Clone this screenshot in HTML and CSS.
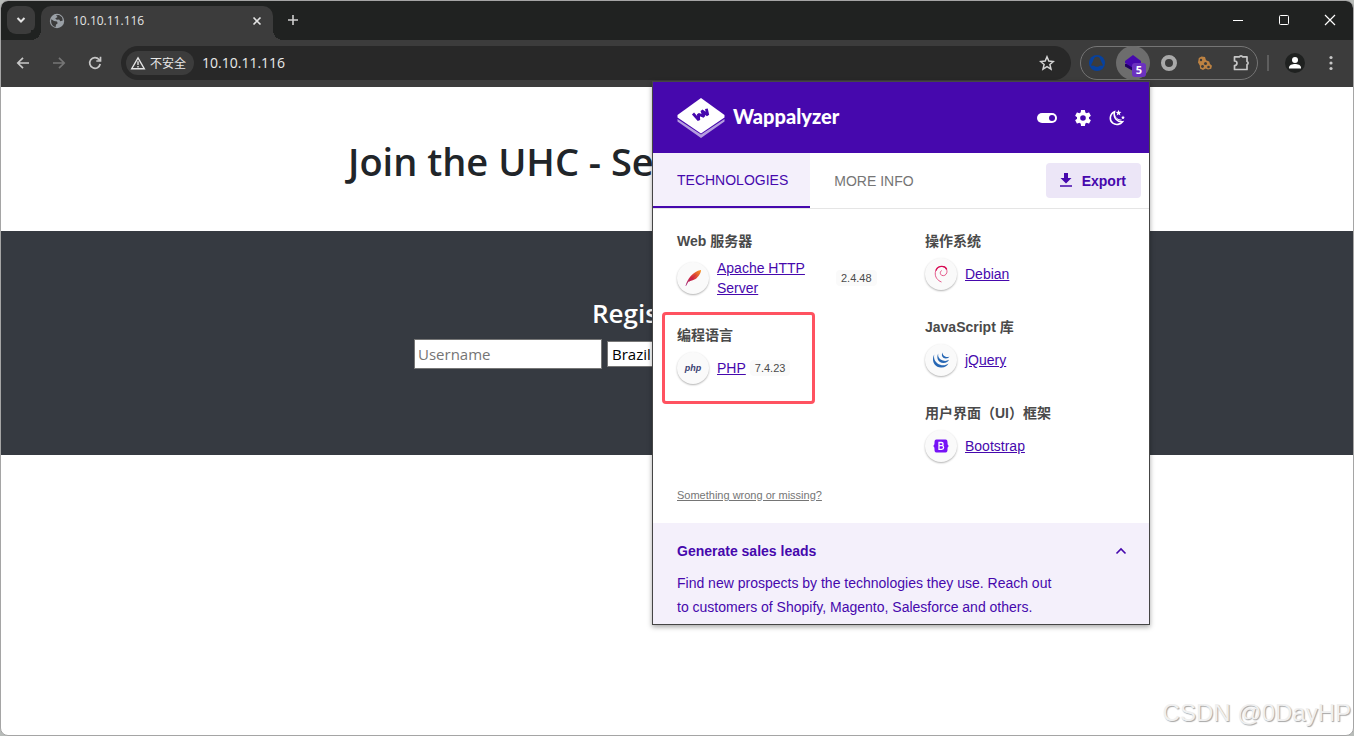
FILE: index.html
```html
<!DOCTYPE html>
<html lang="zh-CN">
<head>
<meta charset="utf-8">
<title>10.10.11.116</title>
<link rel="stylesheet" href="styles.css">
</head>
<body>
<div class="window">
  <header class="tabstrip">
    <button class="tab-search" aria-label="Search tabs"><svg width="12" height="12" viewBox="0 0 12 12"><path d="M2.500 4 6 7.500 9.500 4" fill="none" stroke="#e3e3e3" stroke-width="2"/></svg></button>
    <div class="tab">
      <svg width="16" height="16" viewBox="0 0 16 16"><circle cx="8" cy="8" r="7.200" fill="#9aa0a6"/><path d="M2.300 6.200 5 8l3 .6.7 1.700-1.800 1.400-.2 2.300C3.500 13.600 1.500 10.500 2.300 6.200ZM7 2.200l3-.2 3 2.200.8 3.400-2.400.6-1.300-1.700-2.300.3-1.600-1.400L8.600 4Z" fill="#3c3c3c"/></svg>
      <span class="tab-title">10.10.11.116</span>
      <button class="icon-btn" aria-label="Close tab"><svg width="10" height="10" viewBox="0 0 10 10"><path d="m1.500 1.500 7 7m0-7-7 7" stroke="#e3e3e3" stroke-width="1.600"/></svg></button>
    </div>
    <button class="icon-btn new-tab" aria-label="New tab"><svg width="12" height="12" viewBox="0 0 12 12"><path d="M6 1v10M1 6h10" stroke="#d0d0d0" stroke-width="1.600"/></svg></button>
    <div class="window-controls">
      <button class="icon-btn" aria-label="Minimize"><svg width="12" height="12" viewBox="0 0 12 12"><path d="M1 6.500h10" stroke="#fff"/></svg></button>
      <button class="icon-btn" aria-label="Maximize"><svg width="12" height="12" viewBox="0 0 12 12"><rect x="1.500" y="1.500" width="9" height="9" rx="1" fill="none" stroke="#fff"/></svg></button>
      <button class="icon-btn" aria-label="Close"><svg width="12" height="12" viewBox="0 0 12 12"><path d="m1 1 10 10M11 1 1 11" stroke="#fff" stroke-width="1.200"/></svg></button>
    </div>
  </header>

  <nav class="toolbar">
    <div class="nav-buttons">
      <button class="icon-btn" aria-label="Back"><svg width="16" height="16" viewBox="0 0 16 16"><path d="M14 8H3M8 2.800 2.800 8 8 13.200" fill="none" stroke="#c7c7c7" stroke-width="1.700"/></svg></button>
      <button class="icon-btn" aria-label="Forward"><svg width="16" height="16" viewBox="0 0 16 16"><path d="M2 8h11M8 2.800 13.200 8 8 13.200" fill="none" stroke="#757575" stroke-width="1.700"/></svg></button>
      <button class="icon-btn" aria-label="Reload"><svg width="16" height="16" viewBox="0 0 16 16"><path d="M13.200 9A5.300 5.300 0 1 1 12 4.500L13.500 6M13.500 1.800V6H9.300" fill="none" stroke="#c7c7c7" stroke-width="1.700"/></svg></button>
    </div>
    <div class="omnibox">
      <button class="security"><svg width="16" height="14" viewBox="0 0 16 14"><path d="M8 1.800 14.300 12.700H1.700Z" fill="none" stroke="#e3e3e3" stroke-width="1.400"/><path d="M8 5.300v3.700M8 10v1.400" stroke="#e3e3e3" stroke-width="1.400"/></svg>不安全</button>
      <input class="address" type="text" value="10.10.11.116" aria-label="Address">
      <button class="icon-btn" aria-label="Bookmark this page"><svg width="16" height="16" viewBox="0 0 16 16"><path d="m8 1.800 1.800 4.300 4.600.4-3.500 3 1.100 4.600L8 11.700l-4 2.400 1.100-4.600-3.500-3 4.600-.4Z" fill="none" stroke="#d5d5d5" stroke-width="1.500"/></svg></button>
    </div>
    <div class="extensions">
      <button class="ext" aria-label="Hosts extension"><svg width="18" height="18" viewBox="0 0 18 18"><circle cx="9" cy="9" r="8" fill="#07419d"/><path d="M9 2.800c2.300 0 3 1.600 3.800 4l2.300 4.700-3.400.2c-1 1.500-4.400 1.500-5.400 0l-3.400-.2 2.300-4.700c.8-2.400 1.500-4 3.800-4Z" fill="#3c3c3c"/></svg></button>
      <button class="ext ext-active" aria-label="Wappalyzer"><svg width="18" height="18" viewBox="0 0 18 18"><path d="M1 10v2.500L9 17l8-4.500V10Z" fill="#210062"/><path d="M9 1 17 7v2l-8 5-8-5V7Z" fill="#4608ad"/></svg><span class="badge">5</span></button>
      <button class="ext" aria-label="Proxy"><svg width="18" height="18" viewBox="0 0 18 18"><circle cx="9" cy="9" r="6" fill="none" stroke="#a9a9a9" stroke-width="4"/></svg></button>
      <button class="ext" aria-label="Cookie editor"><svg width="18" height="18" viewBox="0 0 18 18"><path d="M5.500 2.500 9 3l1 3.300 3.200 1.200.8 2.500 2 1.800-.8 3-3.200.8-2.500-1-2.500 1.300-3-1.500-.2-3L2 8.500 2.800 4Z" fill="#bd8242"/><g fill="#3c3c3c"><circle cx="5" cy="6" r="1.200"/><circle cx="9.500" cy="9.500" r="1.500"/><circle cx="6.500" cy="12.500" r="1.400"/><circle cx="12.500" cy="13" r="1.300"/></g></svg></button>
      <button class="ext" aria-label="Extensions"><svg width="18" height="18" viewBox="0 0 18 18"><path d="M2.500 2.900H7.500C7.800 1.500 10.200 1.500 10.500 2.900H15V7.500C16.500 7.800 16.500 10.200 15 10.500V15.500H2.500V11.500C5.800 11.500 5.800 7 2.500 7Z" fill="none" stroke="#c7c7c7" stroke-width="1.700" stroke-linejoin="round"/></svg></button>
    </div>
    <span class="divider"></span>
    <button class="profile" aria-label="Profile"><svg width="20" height="20" viewBox="0 0 20 20"><circle cx="10" cy="7" r="3" fill="#fff"/><path d="M4 15.500v-1c0-2.500 3.500-3.500 6-3.500s6 1 6 3.500v1Z" fill="#fff"/></svg></button>
    <button class="icon-btn menu" aria-label="Menu"><svg width="4" height="16" viewBox="0 0 4 16"><g fill="#c7c7c7"><circle cx="2" cy="2.500" r="1.600"/><circle cx="2" cy="8" r="1.600"/><circle cx="2" cy="13.500" r="1.600"/></g></svg></button>
  </nav>

  <main class="page">
    <h1 class="page-title">Join the UHC - Se</h1>
    <section class="register">
      <h2 class="register-title">Regis</h2>
      <form class="register-form">
        <input class="username" type="text" placeholder="Username" aria-label="Username">
        <select class="country" aria-label="Country"><option>Brazil</option></select>
      </form>
    </section>
  </main>

  <aside class="popup">
    <header class="popup-header">
      <svg width="48" height="40" viewBox="0 0 48 40"><path d="M.5 21v2.500L24 40l23.500-16.500V21L24 36.500Z" fill="#b59ddf"/><path d="M24 0 47.500 17v2.500L24 35.500.5 19.500V17Z" fill="#fff"/><path d="m16 15.500 5.800 6.500-.4-5.800 5.600 2.200-2.200-5.800 6 4.500-1.400-6.300" fill="none" stroke="#4608ad" stroke-width="2.800" stroke-linejoin="bevel"/></svg>
      <span class="brand">Wappalyzer</span>
      <div class="popup-tools">
        <button class="icon-btn" aria-label="Toggle"><svg width="20" height="12" viewBox="0 0 20 12"><rect y="1" width="20" height="10" rx="5" fill="#fff"/><circle cx="15" cy="6" r="3" fill="#4608ad"/></svg></button>
        <button class="icon-btn" aria-label="Settings"><svg width="16" height="16" viewBox="2 2 20 20"><path fill="#fff" d="M12 15.500A3.500 3.500 0 0 1 8.500 12 3.500 3.500 0 0 1 12 8.500a3.500 3.500 0 0 1 3.500 3.500 3.500 3.500 0 0 1-3.500 3.500m7.430-2.530c.04-.32.070-.64.070-.97s-.03-.66-.07-1l2.110-1.630c.19-.15.240-.42.120-.64l-2-3.460c-.12-.22-.39-.31-.61-.22l-2.490 1c-.52-.39-1.060-.73-1.690-.98l-.37-2.650A.506.506 0 0 0 14 2h-4c-.25 0-.46.180-.5.420l-.37 2.650c-.63.250-1.170.590-1.690.98l-2.490-1c-.22-.09-.49 0-.61.220l-2 3.460c-.13.220-.07.490.120.640L4.570 11c-.04.340-.07.670-.07 1s.03.650.070.970l-2.110 1.660c-.19.150-.25.420-.12.640l2 3.460c.12.220.390.300.610.220l2.490-1.010c.52.400 1.060.740 1.690.990l.37 2.650c.04.240.250.420.5.420h4c.25 0 .46-.18.500-.42l.37-2.650c.63-.26 1.170-.59 1.690-.99l2.490 1.010c.22.080.490 0 .61-.22l2-3.460c.12-.22.070-.49-.12-.64z"/></svg></button>
        <button class="icon-btn" aria-label="Dark mode"><svg width="16" height="18" viewBox="1 0 16 18"><path d="M6.500 2.800C1.500 5 1 11.500 4.800 14.200c3.200 2.300 7.700 1.300 9.700-1.400-5 .6-9.500-3.800-8-10Z" fill="none" stroke="#fff" stroke-width="1.600"/><path d="M6.500 5c.2 3.500 3.500 6.200 7 6" fill="none" stroke="#fff"/><path d="m10.500.8.8 2 2.200.1-1.700 1.400.6 2.100-1.900-1.200-1.800 1.200.6-2.100-1.700-1.400 2.200-.1ZM15 6.500l.5 1.300 1.500.1-1.100.9.300 1.400-1.200-.8-1.200.8.300-1.400-1.100-.9 1.500-.1Z" fill="#fff"/></svg></button>
      </div>
    </header>
    <div class="popup-tabs">
      <button class="popup-tab selected">TECHNOLOGIES</button>
      <button class="popup-tab">MORE INFO</button>
      <button class="export"><svg width="14" height="16" viewBox="0 0 14 16"><path d="M5 0h4v5h3.500L7 10.500 1.500 5H5Z" fill="#4608ad"/><path d="M1 13h12" stroke="#4608ad" stroke-width="1.600"/></svg>Export</button>
    </div>
    <div class="technologies">
      <div class="column">
        <section class="category">
          <h3 class="category-title">Web 服务器</h3>
          <div class="tech"><span class="logo"><svg width="18" height="18" viewBox="0 0 18 18"><defs><linearGradient id="feather" x1="0" y1="1" x2="1" y2="0"><stop offset="0" stop-color="#9b2d83"/><stop offset=".45" stop-color="#d4243b"/><stop offset="1" stop-color="#f69923"/></linearGradient></defs><path d="M1.500 17C3.500 10 8.500 2.500 17 1c.2 2.500-2.500 7-5.500 9-2 1.200-5 2-7 2.500L2 17Z" fill="url(#feather)"/><path d="M4.500 13 12 5.500" stroke="#b02256" stroke-width=".7"/></svg></span><a class="tech-link wrap" href="#">Apache HTTP Server</a><span class="version">2.4.48</span></div>
        </section>
        <section class="category">
          <h3 class="category-title">编程语言</h3>
          <div class="tech"><span class="logo php">php</span><a class="tech-link" href="#">PHP</a><span class="version">7.4.23</span></div>
        </section>
      </div>
      <div class="column">
        <section class="category">
          <h3 class="category-title">操作系统</h3>
          <div class="tech"><span class="logo"><svg width="16" height="18" viewBox="0 0 16 18"><path d="M8.500 17C4.500 15.500 1.800 12 2.300 7.500 2.700 3.500 6 1.300 9 1.500c3.500.2 5.600 3.300 4.800 6.200-.6 2.400-3 3.500-4.900 2.700-2-.9-2.200-3.700-.2-4.900" fill="none" stroke="#e0437c" stroke-width=".9"/><path d="M3 5.500C4 2.500 7 1 9.500 1.400c2 .2 3.600 1.500 4.200 3" fill="none" stroke="#d70a53" stroke-width="1.400"/></svg></span><a class="tech-link" href="#">Debian</a></div>
        </section>
        <section class="category">
          <h3 class="category-title">JavaScript 库</h3>
          <div class="tech"><span class="logo"><svg width="18" height="18" viewBox="0 0 18 18"><g fill="#2767b4"><path d="M2.300 3.500C-.5 8 1 16 9 16.500c3.800.2 6.500-1.800 7.500-4-2.500 1.800-5.500 2.200-8.300 1.200C3.500 12 1.200 8 2.300 3.500Z"/><path d="M6.300 2.500C4 6.500 6 11.800 11.500 12c2.800 0 4.800-1.400 5.500-3.200-2 1.200-4 1.400-6 .8C7.500 8.500 5.500 5.800 6.300 2.500Z"/><path d="M10.500 1.500C9 4.500 10.500 7.300 13.800 7.500c1.800 0 3-.8 3.700-2-1.300.6-2.700.7-3.900.2-2-.8-3.300-2.300-3.100-4.200Z"/></g></svg></span><a class="tech-link" href="#">jQuery</a></div>
        </section>
        <section class="category">
          <h3 class="category-title">用户界面（UI）框架</h3>
          <div class="tech"><span class="logo"><svg width="16" height="14" viewBox="0 0 16 14"><path d="M3.500.5h9C14.300.5 14.500 2 14.500 3.500c0 1.800.3 3 1.500 3.500-1.200.5-1.500 1.700-1.500 3.500 0 1.500-.2 3-2 3h-9c-1.800 0-2-1.500-2-3C1.500 8.700 1.200 7.500 0 7c1.200-.5 1.500-1.700 1.500-3.500 0-1.500.2-3 2-3Z" fill="#7612f6"/><path d="M6 3.500h2.500a1.600 1.600 0 0 1 0 3.200H6Zm0 3.200h2.800a1.800 1.800 0 0 1 0 3.600H6Z" fill="none" stroke="#fff" stroke-width="1.300"/></svg></span><a class="tech-link" href="#">Bootstrap</a></div>
        </section>
      </div>
    </div>
    <a class="feedback" href="#">Something wrong or missing?</a>
    <section class="leads">
      <div class="leads-head"><h3 class="leads-title">Generate sales leads</h3><button class="icon-btn" aria-label="Collapse"><svg width="12" height="8" viewBox="0 0 12 8"><path d="m1.500 6.500 4.500-4.500 4.500 4.500" fill="none" stroke="#4608ad" stroke-width="1.600"/></svg></button></div>
      <p class="leads-text">Find new prospects by the technologies they use. Reach out to customers of Shopify, Magento, Salesforce and others.</p>
    </section>
    <div class="highlight"></div>
  </aside>
  <div class="watermark">CSDN @0DayHP</div>
</div>
</body>
</html>
```
FILE: styles.css
```css
* { box-sizing: border-box; }
body { margin: 0; background: #b8bcb9; font-family: "Open Sans", "Noto Sans CJK SC", sans-serif; }
button, input, select { font-family: inherit; margin: 0; }
button { border: 0; padding: 0; background: none; }
svg { display: block; flex: none; }
h1, h2, h3, p { margin: 0; }

.window { position: relative; display: flex; flex-direction: column; min-height: 100vh; border: 1px solid #a5a5a5; border-radius: 8px; background: #fff; overflow: hidden; }
.icon-btn { display: flex; align-items: center; justify-content: center; }

.tabstrip { display: flex; align-items: center; height: 39px; padding: 0 0 1px 6px; background: #202221; }
.tab-search { display: flex; align-items: center; justify-content: center; width: 28px; height: 28px; border-radius: 9px; background: #3c3c3c; }
.tab { position: relative; display: flex; align-items: center; gap: 8px; align-self: flex-end; width: 232px; height: 34px; margin: 0 0 -1px 6px; padding: 0 11px 5px 8px; border-radius: 10px 10px 0 0; background: #3c3c3c; }
.tab::before, .tab::after { content: ""; position: absolute; bottom: 0; width: 10px; height: 10px; }
.tab::before { right: 100%; background: radial-gradient(circle at 0 0, #202221 10px, #3c3c3c 10px); }
.tab::after { left: 100%; background: radial-gradient(circle at 100% 0, #202221 10px, #3c3c3c 10px); }
.tab-title { flex: 1; color: #e3e3e3; font-size: 12px; }
.new-tab { width: 40px; height: 28px; }
.window-controls { display: flex; margin-left: auto; }
.window-controls .icon-btn { width: 46px; height: 38px; }

.toolbar { display: flex; align-items: center; height: 47px; padding: 0 14px 2px; background: #3c3c3c; }
.nav-buttons { display: flex; gap: 20px; }
.omnibox { display: flex; align-items: center; flex: 1; height: 34px; margin: 0 9px 0 18px; padding: 0 16px 0 5px; border-radius: 17px; background: #282828; }
.security { display: flex; align-items: center; gap: 4px; height: 24px; padding: 0 8px 0 4px; border-radius: 12px; background: #3c3c3c; color: #e8e8e8; font-size: 12px; }
.address { flex: 1; min-width: 0; border: 0; padding: 0 8px; background: none; color: #e8e8e8; font-size: 14px; outline: 0; }
.extensions { display: flex; align-items: center; justify-content: center; gap: 2px; width: 178px; height: 34px; border: 1px solid #757575; border-radius: 17px; }
.ext { position: relative; display: flex; align-items: center; justify-content: center; flex: none; width: 34px; height: 34px; border-radius: 50%; }
.ext-active { background: #6d6d6d; }
.badge { position: absolute; right: 4px; bottom: 3px; width: 14px; height: 14px; border-radius: 3px; background: #6b32bf; color: #fff; font-size: 11px; font-weight: 700; line-height: 14px; }
.divider { width: 2px; height: 16px; margin: 0 16px 0 9px; background: #5e5e5e; }
.profile { display: flex; align-items: center; justify-content: center; width: 20px; height: 20px; border-radius: 50%; background: #1f2120; }
.menu { width: 20px; margin-left: 16px; margin-right: -2px; }

.page { flex: 1; color: #212529; }
.page-title { width: 658px; margin: 0 auto; padding: 50px 0 46px; font-size: 38px; font-weight: 600; line-height: 48px; white-space: nowrap; }
.register { height: 224px; padding-top: 65px; background: #363a41; color: #fff; }
.register-title { width: 170px; margin: 0 auto; font-size: 26px; font-weight: 600; line-height: 34px; }
.register-form { display: flex; align-items: center; gap: 5px; width: 526px; margin: 9px auto 0; }
.username { width: 188px; height: 30px; border: 1px solid #767676; padding: 1px 3px; background: #fff; font-size: 15px; }
.username::placeholder { color: #757575; }
.country { width: 180px; height: 26px; border: 1px solid #767676; border-radius: 0; background: #fff; color: #000; font-size: 15px; padding: 0; }

.popup { position: absolute; top: 80px; right: 203px; width: 498px; border: 1px solid #454545; background: #fff; box-shadow: 0 2px 5px rgba(0, 0, 0, .35); font-family: "Liberation Sans", "Noto Sans CJK SC", sans-serif; font-size: 14px; }
.popup-header { display: flex; align-items: center; gap: 8px; height: 71px; padding: 0 24px; background: #4608ad; }
.brand { padding-bottom: 4px; color: #fff; font-family: Lato, sans-serif; font-size: 20px; font-weight: 900; }
.popup-tools { display: flex; align-items: center; gap: 18px; margin-left: auto; }
.popup-tabs { display: flex; height: 56px; padding-right: 8px; border-bottom: 1px solid #e5e5e5; }
.popup-tab { padding: 0 22px 0 24px; color: #757575; font-size: 14px; }
.popup-tab.selected { border-bottom: 2px solid #4608ad; background: #f4f0fb; color: #4608ad; }
.export { display: flex; align-items: center; gap: 9px; align-self: center; height: 35px; margin-left: auto; padding: 0 15px 0 13px; border-radius: 4px; background: #ece6f7; color: #4608ad; font-size: 14px; font-weight: 700; }
.technologies { display: grid; grid-template-columns: 1fr 1fr; padding: 22px 0 0 24px; }
.column { display: flex; flex-direction: column; gap: 27px; }
.column + .column { margin-left: 12px; }
.category { display: flex; flex-direction: column; gap: 7px; }
.category-title { color: #4a4a4a; font-size: 14px; font-weight: 700; line-height: 20px; }
.tech { display: flex; align-items: center; }
.logo { display: flex; align-items: center; justify-content: center; flex: none; width: 32px; height: 32px; margin-right: 8px; border-radius: 50%; background: #fafafa; box-shadow: 0 1px 2px rgba(0, 0, 0, .3); }
.php { color: #3c4373; font-size: 9px; font-style: italic; font-weight: 700; }
.tech-link { color: #4608ad; line-height: 20px; }
.wrap { width: 115px; padding-right: 20px; }
.version { margin-left: 4px; padding: 0 5px; border-radius: 4px; background: #fafafa; color: #4a4a4a; font-size: 11px; line-height: 16px; }
.feedback { display: block; padding: 25px 24px 20px; color: #757575; font-size: 11px; line-height: 16px; }
.leads { padding: 16px 22px 5px 24px; background: #f4f0fb; color: #4608ad; }
.leads-head { display: flex; align-items: center; justify-content: space-between; }
.leads-title { font-size: 14px; line-height: 24px; }
.leads-text { max-width: 384px; margin-top: 8px; line-height: 24px; }
.highlight { position: absolute; top: 230px; left: 9px; width: 153px; height: 92px; border: 3px solid #ff5260; border-radius: 4px; }
.watermark { position: absolute; right: 2px; bottom: 6px; color: #f0f0f0; font-family: "Liberation Sans", sans-serif; font-size: 24px; line-height: 32px; text-shadow: 1px 1px 1px #a5a5a5; }
```
